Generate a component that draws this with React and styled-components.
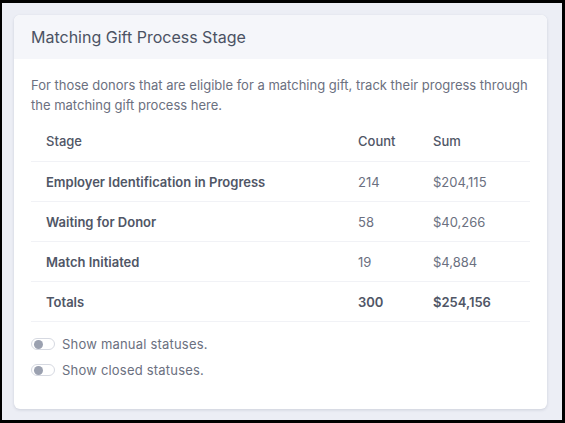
import React from 'react'
import styled, { createGlobalStyle } from 'styled-components'

const Global = createGlobalStyle`
  html, body { margin: 0; padding: 0; background: #000; }
  body { font-family: Inter, "Noto Sans", sans-serif; }
`

const Frame = styled.div`
  margin: 3px 3px 0 2px;
  height: 417px;
  background: #eceef5;
  padding: 12px 15px 0 12px;
  box-sizing: border-box;
`

const Card = styled.div`
  width: 533px;
  height: 394px;
  background: #fff;
  border-radius: 6px;
  box-shadow: 0 1px 3px rgba(60, 70, 100, 0.18);
  overflow: hidden;
  display: flex;
  flex-direction: column;
`

const Header = styled.div`
  height: 44px;
  background: #f5f6fa;
  display: flex;
  align-items: center;
  padding: 0 17px;
  font-size: 16px;
  color: #4b5263;
`

const Body = styled.div`
  padding: 16px 17px 0 17px;
`

const Desc = styled.p`
  margin: 0;
  font-size: 13px;
  line-height: 20px;
  color: #6b7080;
`

const Table = styled.table`
  width: 499px;
  margin-top: 6px;
  border-collapse: collapse;
  font-size: 13px;
`

const Th = styled.th`
  text-align: left;
  font-weight: 500;
  color: #505666;
  height: 40px;
  padding: 0 0 0 ${p => p.$pl || 0}px;
  width: ${p => p.$w || 'auto'};
  border-bottom: 1px solid #f1f2f6;
`

const Td = styled.td`
  height: 39px;
  padding: 0 0 0 ${p => p.$pl || 0}px;
  color: ${p => (p.$strong ? '#505666' : '#6b7080')};
  font-weight: ${p => (p.$strong ? 600 : 400)};
  border-bottom: 1px solid #f1f2f6;
`

const Options = styled.div`
  margin-top: 14px;
  display: flex;
  flex-direction: column;
  gap: 10px;
`

const Option = styled.label`
  display: flex;
  align-items: center;
  gap: 7px;
  font-size: 13px;
  color: #6b7080;
  letter-spacing: 0.2px;
`

const Track = styled.span`
  width: 24px;
  height: 12px;
  border: 1px solid #d6d9e1;
  border-radius: 8px;
  background: #fff;
  display: flex;
  align-items: center;
  padding-left: 2px;
  box-sizing: border-box;
`

const Knob = styled.span`
  width: 9px;
  height: 9px;
  border-radius: 50%;
  background: #9ba1b0;
`

const rows = [
  ['Employer Identification in Progress', '214', '$204,115'],
  ['Waiting for Donor', '58', '$40,266'],
  ['Match Initiated', '19', '$4,884'],
]

export default function App() {
  return (
    <>
      <Global />
      <Frame>
        <Card>
          <Header>Matching Gift Process Stage</Header>
          <Body>
            <Desc>
              For those donors that are eligible for a matching gift, track their progress through
              the matching gift process here.
            </Desc>
            <Table>
              <thead>
                <tr>
                  <Th $pl={15} $w="312px">Stage</Th>
                  <Th $w="75px">Count</Th>
                  <Th>Sum</Th>
                </tr>
              </thead>
              <tbody>
                {rows.map(r => (
                  <tr key={r[0]}>
                    <Td $pl={15} $strong>{r[0]}</Td>
                    <Td>{r[1]}</Td>
                    <Td>{r[2]}</Td>
                  </tr>
                ))}
                <tr>
                  <Td $pl={15} $strong>Totals</Td>
                  <Td $strong>300</Td>
                  <Td $strong>$254,156</Td>
                </tr>
              </tbody>
            </Table>
            <Options>
              <Option><Track><Knob /></Track>Show manual statuses.</Option>
              <Option><Track><Knob /></Track>Show closed statuses.</Option>
            </Options>
          </Body>
        </Card>
      </Frame>
    </>
  )
}
